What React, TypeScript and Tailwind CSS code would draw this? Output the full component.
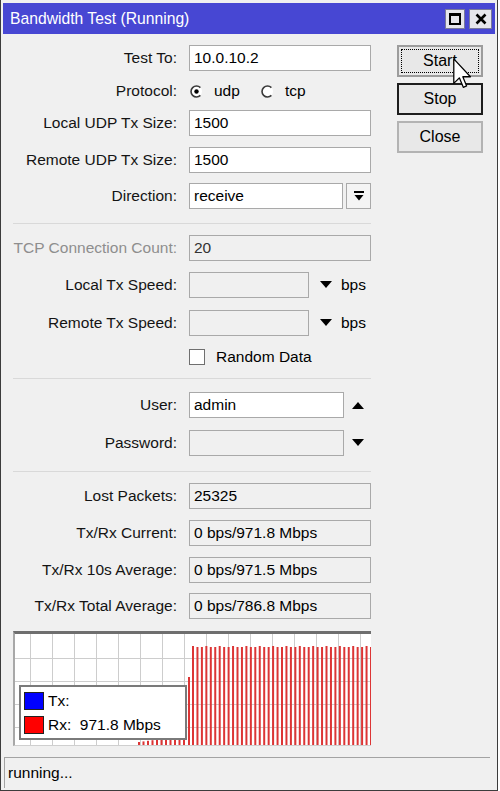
import type { ReactNode } from "react";

function Field({
  label,
  grey = false,
  className = "",
  children,
}: {
  label: string;
  grey?: boolean;
  className?: string;
  children: ReactNode;
}) {
  return (
    <div className={`flex items-center h-[26px] ${className}`}>
      <div
        className={`w-[164px] shrink-0 text-right whitespace-nowrap ${
          grey ? "text-[#8e8e8e]" : "text-[#141414]"
        }`}
      >
        {label}
      </div>
      <div className="ml-[12px] flex items-center h-full">{children}</div>
    </div>
  );
}

function Box({
  width,
  white = false,
  children,
}: {
  width: string;
  white?: boolean;
  children?: ReactNode;
}) {
  return (
    <div
      className={`${width} h-[26px] border border-[#a9a9a9] px-[4px] flex items-center whitespace-nowrap text-black ${
        white ? "bg-white" : "bg-[#f0f0f0]"
      }`}
    >
      {children}
    </div>
  );
}

function Tri({ up = false }: { up?: boolean }) {
  return (
    <svg width="12" height="8" viewBox="0 0 12 8" className="shrink-0">
      <polygon points={up ? "0,8 12,8 6,1" : "0,0 12,0 6,7"} fill="#000" />
    </svg>
  );
}

function Radio({ on }: { on: boolean }) {
  return (
    <svg width="13" height="13" viewBox="0 0 13 13" className="shrink-0">
      <circle cx="6.5" cy="6.5" r="5.5" fill="#fff" />
      <path d="M10.4 2.6 A5.5 5.5 0 1 0 10.4 10.4" fill="none" stroke="#3a3a3a" strokeWidth="1.6" />
      {on && <circle cx="6.5" cy="6.5" r="2.2" fill="#000" />}
    </svg>
  );
}

function Sep({ className }: { className: string }) {
  return <div className={`w-[358px] h-px bg-[#d9d9d9] ${className}`} />;
}

const vLines = Array.from({ length: 16 }, (_, i) => 15 + i * 22);
const hLines = [24, 47, 70, 93];
const smallBars = Array.from({ length: 11 }, (_, i) => ({
  x: 123 + i * 4.5,
  h: 3 + Math.min(i, 6) * 0.6,
}));
const tallBars = Array.from({ length: 41 }, (_, i) => ({
  x: 177 + i * 4.45,
  top: 12 + ((i * 7) % 3 === 0 ? 0 : 1),
}));

function Chart() {
  return (
    <div className="relative mt-[12px] w-[358px] h-[115px] bg-white border-t-[3px] border-t-[#6e6e6e] border-l-2 border-l-[#a8a8a8] border-b border-b-[#cfcfcf]">
      <svg width="356" height="111" viewBox="0 0 356 111" className="block">
        {vLines.map((x) => (
          <line key={x} x1={x + 0.5} y1="0" x2={x + 0.5} y2="111" stroke="#cdcdcd" strokeWidth="1" />
        ))}
        {hLines.map((y) => (
          <line key={y} x1="0" y1={y + 0.5} x2="356" y2={y + 0.5} stroke="#cdcdcd" strokeWidth="1" />
        ))}
        {smallBars.map((b) => (
          <rect key={b.x} x={b.x} y={111 - b.h} width="2" height={b.h} fill="#dc3535" />
        ))}
        <rect x="173" y="43" width="2" height="68" fill="#dc3535" />
        {tallBars.map((b) => (
          <rect key={b.x} x={b.x} y={b.top} width="2" height={111 - b.top} fill="#dc3535" />
        ))}
      </svg>
      <div className="absolute left-[4px] top-[51px] w-[168px] h-[55px] bg-white border-2 border-[#7a7a7a] text-[15.5px] text-black flex flex-col justify-center gap-[5px] pl-[3px]">
        <div className="flex items-center gap-[4px] h-[19px]">
          <div className="w-[20px] h-[18px] bg-[#0000ff] border border-[#222]" />
          <span>Tx:</span>
        </div>
        <div className="flex items-center gap-[4px] h-[19px]">
          <div className="w-[20px] h-[18px] bg-[#ff0000] border border-[#222]" />
          <span className="whitespace-pre">Rx:  971.8 Mbps</span>
        </div>
      </div>
    </div>
  );
}

export default function App() {
  return (
    <div className="w-[500px] h-[791px] bg-white font-['Liberation_Sans',Arial,sans-serif] text-[15.5px] leading-none">
      <div className="relative w-[498px] h-[791px] bg-[#f0f0f0] border border-t-0 border-[#3c3c3c] px-[2px] pt-[3px] pb-[2px] flex flex-col">
        {/* title bar */}
        <div className="h-[31px] bg-[#4747d3] flex items-center justify-between pl-[7px] pr-[3px]">
          <span className="text-white text-[15.7px]">Bandwidth Test (Running)</span>
          <div className="flex items-center gap-[4px]">
            <div className="w-[20px] h-[20px] bg-[#e6e6ec] border border-[#7a7a9a] flex items-center justify-center">
              <div className="w-[12px] h-[12px] border-2 border-t-[3px] border-black" />
            </div>
            <div className="w-[23px] h-[20px] bg-[#e6e6ec] border border-[#7a7a9a] flex items-center justify-center">
              <svg width="12" height="12" viewBox="0 0 12 12">
                <path d="M1.5 1.5 L10.5 10.5 M10.5 1.5 L1.5 10.5" stroke="#000" strokeWidth="2.6" />
              </svg>
            </div>
          </div>
        </div>

        {/* body */}
        <div className="flex pt-[11px] pl-[10px]">
          <div className="w-[358px] flex flex-col">
            <Field label="Test To:">
              <Box width="w-[182px]" white>10.0.10.2</Box>
            </Field>
            <Field label="Protocol:" className="mt-[7px]">
              <div className="flex items-center text-black">
                <div className="ml-[1px]">
                  <Radio on />
                </div>
                <span className="ml-[11px]">udp</span>
                <div className="ml-[21px]">
                  <Radio on={false} />
                </div>
                <span className="ml-[11px]">tcp</span>
              </div>
            </Field>
            <Field label="Local UDP Tx Size:" className="mt-[6px]">
              <Box width="w-[182px]" white>1500</Box>
            </Field>
            <Field label="Remote UDP Tx Size:" className="mt-[11px]">
              <Box width="w-[182px]" white>1500</Box>
            </Field>
            <Field label="Direction:" className="mt-[10px]">
              <Box width="w-[154px]" white>receive</Box>
              <div className="ml-[3px] w-[25px] h-[26px] border border-[#a9a9a9] bg-[#f4f4f4] flex items-center justify-center">
                <svg width="10" height="10" viewBox="0 0 10 10">
                  <rect x="0" y="0" width="10" height="2" fill="#000" />
                  <polygon points="0.5,4 9.5,4 5,9.5" fill="#000" />
                </svg>
              </div>
            </Field>
            <Sep className="mt-[14px]" />
            <Field label="TCP Connection Count:" grey className="mt-[11px]">
              <Box width="w-[182px]">
                <span className="text-[#333]">20</span>
              </Box>
            </Field>
            <Field label="Local Tx Speed:" className="mt-[11px]">
              <Box width="w-[120px]" />
              <div className="ml-[11px]">
                <Tri />
              </div>
              <span className="ml-[9px] text-black">bps</span>
            </Field>
            <Field label="Remote Tx Speed:" className="mt-[12px]">
              <Box width="w-[120px]" />
              <div className="ml-[11px]">
                <Tri />
              </div>
              <span className="ml-[9px] text-black">bps</span>
            </Field>
            <div className="flex items-center h-[24px] mt-[9px]">
              <div className="ml-[176px] w-[16px] h-[16px] bg-white border border-[#6f6f6f]" />
              <span className="ml-[11px] text-black">Random Data</span>
            </div>
            <Sep className="mt-[9px]" />
            <Field label="User:" className="mt-[13px]">
              <Box width="w-[155px]" white>admin</Box>
              <div className="ml-[8px]">
                <Tri up />
              </div>
            </Field>
            <Field label="Password:" className="mt-[12px]">
              <Box width="w-[155px]" />
              <div className="ml-[8px]">
                <Tri />
              </div>
            </Field>
            <Sep className="mt-[15px]" />
            <Field label="Lost Packets:" className="mt-[11px]">
              <Box width="w-[182px]">25325</Box>
            </Field>
            <Field label="Tx/Rx Current:" className="mt-[11px]">
              <Box width="w-[182px]">0 bps/971.8 Mbps</Box>
            </Field>
            <Field label="Tx/Rx 10s Average:" className="mt-[11px]">
              <Box width="w-[182px]">0 bps/971.5 Mbps</Box>
            </Field>
            <Field label="Tx/Rx Total Average:" className="mt-[10px]">
              <Box width="w-[182px]">0 bps/786.8 Mbps</Box>
            </Field>
            <Chart />
          </div>

          {/* buttons */}
          <div className="ml-[26px] w-[86px] flex flex-col gap-[6px] text-[16px] text-black">
            <div className="h-[32px] bg-[#e8e8e8] border-2 border-[#9c9c9c] p-[2px]">
              <div className="w-full h-full border border-dotted border-black flex items-center justify-center">
                Start
              </div>
            </div>
            <div className="h-[32px] bg-[#e8e8e8] border-2 border-[#1e1e1e] flex items-center justify-center">
              Stop
            </div>
            <div className="h-[32px] bg-[#e8e8e8] border-2 border-[#b3b3b3] flex items-center justify-center">
              Close
            </div>
          </div>
        </div>

        {/* status bar */}
        <div className="mt-auto ml-[1px] w-[486px] h-[31px] border-t border-l border-[#a3a3a3] flex items-center pl-[3px] text-black">
          running...
        </div>

        {/* mouse pointer */}
        <svg
          width="19"
          height="31"
          viewBox="0 0 12 19.5"
          className="absolute left-[452px] top-[58px]"
        >
          <path
            d="M0.5 0.5 L0.5 16 L4 12.5 L6.5 18.5 L8.6 17.6 L6.2 11.8 L11 11.8 Z"
            fill="#fff"
            stroke="#000"
            strokeWidth="0.8"
            strokeLinejoin="round"
          />
        </svg>
      </div>
    </div>
  );
}
